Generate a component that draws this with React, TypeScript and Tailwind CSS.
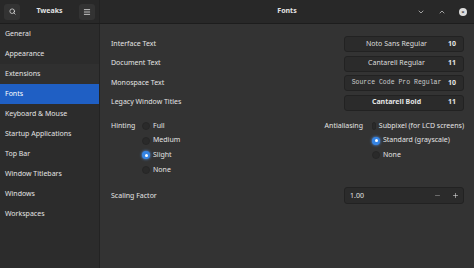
import { Search, Menu, ChevronDown, ChevronUp, Minus, Plus } from 'lucide-react';

const sections = [
    'General',
    'Appearance',
    'Extensions',
    'Fonts',
    'Keyboard & Mouse',
    'Startup Applications',
    'Top Bar',
    'Window Titlebars',
    'Windows',
    'Workspaces',
];

const fonts = [
    { label: 'Interface Text', name: 'Noto Sans Regular', size: '10', mono: false, bold: false },
    { label: 'Document Text', name: 'Cantarell Regular', size: '11', mono: false, bold: false },
    { label: 'Monospace Text', name: 'Source Code Pro Regular', size: '10', mono: true, bold: false },
    { label: 'Legacy Window Titles', name: 'Cantarell Bold', size: '11', mono: false, bold: true },
];

function Radio({ checked, label }: { checked?: boolean; label: string }) {
    return (
        <div className="flex items-center gap-[3px] h-[14.7px] whitespace-nowrap">
            {checked ? (
                <span className="w-[8px] h-[8px] rounded-full bg-[#3584e4] flex items-center justify-center shadow-[0_0_3px_#5aa0ff]">
                    <span className="w-[3px] h-[3px] rounded-full bg-white" />
                </span>
            ) : (
                <span className="w-[8px] h-[8px] rounded-full bg-[#2a2a2a] border border-[#262626]" />
            )}
            <span>{label}</span>
        </div>
    );
}

export default function App() {
    return (
        <div
            className="w-[474px] h-[268px] flex flex-col bg-[#333333] text-[#e4e4e4] text-[7px] overflow-hidden"
            style={{ fontFamily: '"Noto Sans", "Open Sans", sans-serif' }}
        >
            <header className="flex h-[24px] bg-[#282828] border-b border-[#1d1d1d] shrink-0">
                <div className="w-[100px] flex items-center justify-between px-[4px] border-r border-[#222]">
                    <button className="w-[16px] h-[16px] rounded-[3px] bg-[#333] flex items-center justify-center">
                        <Search size={7} strokeWidth={2.5} />
                    </button>
                    <span className="font-bold">Tweaks</span>
                    <button className="w-[16px] h-[16px] rounded-[3px] bg-[#333] flex items-center justify-center">
                        <Menu size={8} strokeWidth={2.5} />
                    </button>
                </div>
                <div className="flex-1 relative flex items-center justify-center">
                    <span className="font-bold">Fonts</span>
                    <div className="absolute right-[7px] top-0 h-full flex items-center gap-[13px] text-[#bbb]">
                        <ChevronDown size={8} strokeWidth={2.5} />
                        <ChevronUp size={8} strokeWidth={2.5} />
                        <span className="w-[8px] h-[8px] rounded-full bg-[#ddd] flex items-center justify-center">
                            <span className="text-[#333] text-[6px] leading-none font-bold">×</span>
                        </span>
                    </div>
                </div>
            </header>
            <div className="flex flex-1">
                <nav className="w-[100px] bg-[#2c2c2c] border-r border-[#232323] shrink-0">
                    {sections.map((s) => (
                        <div
                            key={s}
                            className={
                                s === 'Fonts'
                                    ? 'h-[20px] flex items-center px-[5px] bg-[#1f5fc4] text-white'
                                    : s === 'Extensions'
                                      ? 'h-[20px] flex items-center px-[5px] bg-[#303030]'
                                      : 'h-[20px] flex items-center px-[5px]'
                            }
                        >
                            {s}
                        </div>
                    ))}
                </nav>
                <main className="flex-1 pl-[11px] pr-[10px] pt-[12px]">
                    <div className="flex flex-col gap-[3.5px]">
                        {fonts.map((f) => (
                            <div key={f.label} className="flex items-center justify-between h-[16px]">
                                <span>{f.label}</span>
                                <div className="w-[120px] h-[16px] rounded-[3px] bg-[#2b2b2b] border border-[#222] flex items-center pr-[7px]">
                                    <span
                                        className={
                                            f.mono
                                                ? 'flex-1 text-center text-[6.5px] text-[#ccc]'
                                                : f.bold
                                                  ? 'flex-1 text-center font-bold'
                                                  : 'flex-1 text-center text-[#ddd]'
                                        }
                                        style={f.mono ? { fontFamily: '"Liberation Mono", monospace' } : undefined}
                                    >
                                        {f.name}
                                    </span>
                                    <span className="font-bold">{f.size}</span>
                                </div>
                            </div>
                        ))}
                    </div>
                    <div className="flex mt-[8px]">
                        <div className="flex w-[180px]">
                            <span className="w-[31px] h-[14.7px] flex items-center">Hinting</span>
                            <div className="flex flex-col">
                                <Radio label="Full" />
                                <Radio label="Medium" />
                                <Radio checked label="Slight" />
                                <Radio label="None" />
                            </div>
                        </div>
                        <div className="flex flex-1 justify-end gap-[9px]">
                            <span className="h-[14.7px] flex items-center">Antialiasing</span>
                            <div className="flex flex-col w-[92px]">
                                <Radio label="Subpixel (for LCD screens)" />
                                <Radio checked label="Standard (grayscale)" />
                                <Radio label="None" />
                            </div>
                        </div>
                    </div>
                    <div className="flex items-center justify-between mt-[10px] h-[17px]">
                        <span>Scaling Factor</span>
                        <div className="w-[120px] h-[17px] rounded-[3px] bg-[#2b2b2b] border border-[#222] flex items-center pl-[5px] pr-[4px]">
                            <span className="flex-1">1.00</span>
                            <Minus size={7} strokeWidth={2} className="text-[#999] mr-[11px]" />
                            <Plus size={7} strokeWidth={2} className="text-[#ddd]" />
                        </div>
                    </div>
                </main>
            </div>
        </div>
    );
}
